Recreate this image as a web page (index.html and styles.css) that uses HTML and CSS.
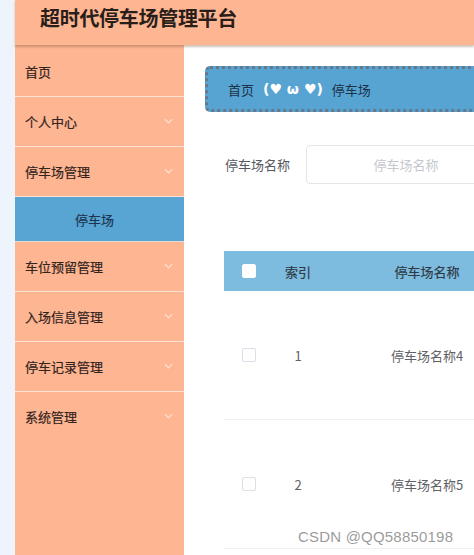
FILE: index.html
```html
<!DOCTYPE html>
<html lang="zh">
<head>
<meta charset="utf-8">
<title>超时代停车场管理平台</title>
<link rel="stylesheet" href="styles.css">
</head>
<body>
<div class="app">
  <header class="topbar"><h1 class="title">超时代停车场管理平台</h1></header>
  <div class="layout">
    <nav class="sidebar">
      <div class="menu-item">首页</div>
      <div class="menu-item">个人中心<svg class="chev" viewBox="0 0 10 6"><polyline points="1,1 5,5 9,1"/></svg></div>
      <div class="menu-item">停车场管理<svg class="chev" viewBox="0 0 10 6"><polyline points="1,1 5,5 9,1"/></svg></div>
      <div class="menu-item active">停车场</div>
      <div class="menu-item">车位预留管理<svg class="chev" viewBox="0 0 10 6"><polyline points="1,1 5,5 9,1"/></svg></div>
      <div class="menu-item">入场信息管理<svg class="chev" viewBox="0 0 10 6"><polyline points="1,1 5,5 9,1"/></svg></div>
      <div class="menu-item">停车记录管理<svg class="chev" viewBox="0 0 10 6"><polyline points="1,1 5,5 9,1"/></svg></div>
      <div class="menu-item last">系统管理<svg class="chev" viewBox="0 0 10 6"><polyline points="1,1 5,5 9,1"/></svg></div>
    </nav>
    <main class="main">
      <div class="crumb"><span>首页</span><span class="face">(♥ ω ♥)</span><span>停车场</span></div>
      <form class="search">
        <label class="label">停车场名称</label>
        <input class="input" type="text" placeholder="停车场名称">
      </form>
      <div class="table">
        <div class="row head">
          <div class="c c1"><span class="box white"></span></div>
          <div class="c c2">索引</div>
          <div class="c c3">停车场名称</div>
        </div>
        <div class="row">
          <div class="c c1"><span class="box"></span></div>
          <div class="c c2">1</div>
          <div class="c c3">停车场名称4</div>
        </div>
        <div class="row">
          <div class="c c1"><span class="box"></span></div>
          <div class="c c2">2</div>
          <div class="c c3">停车场名称5</div>
        </div>
      </div>
    </main>
  </div>
</div>
<div class="watermark">CSDN @QQ58850198</div>
</body>
</html>
```
FILE: styles.css
```css
html, body {
  margin: 0;
  padding: 0;
  height: 100%;
  overflow: hidden;
}
body {
  background: #eef4fb;
  font-family: "Noto Sans CJK SC", "Noto Sans", sans-serif;
  position: relative;
}
.app {
  margin-left: 15px;
  height: 100%;
  display: flex;
  flex-direction: column;
}
.topbar {
  height: 45px;
  flex: none;
  background: #fdb592;
  box-shadow: 0 2px 2px rgba(120, 80, 60, 0.35);
  position: relative;
  z-index: 2;
}
.title {
  margin: 0;
  padding-left: 25px;
  font-size: 20px;
  line-height: 36px;
  font-weight: 700;
  color: #2a1e1a;
  letter-spacing: -0.3px;
}
.layout {
  flex: 1;
  display: flex;
  min-height: 0;
}
.sidebar {
  width: 169px;
  flex: none;
  background: #fdb592;
  padding-top: 2px;
}
.menu-item {
  height: 49px;
  border-bottom: 1px solid #fde2d3;
  display: flex;
  align-items: center;
  justify-content: space-between;
  padding: 0 11px 0 10px;
  font-size: 13px;
  color: #33231d;
  -webkit-text-stroke: 0.2px #33231d;
}
.menu-item.last { border-bottom: none; }
.menu-item.active {
  height: 44px;
  background: #58a5d4;
  color: #1d3550;
  -webkit-text-stroke: 0.2px #1d3550;
  padding-left: 60px;
  justify-content: flex-start;
  border-bottom: 1px solid #e6d8cf;
}
.chev {
  width: 9px;
  height: 6px;
  fill: none;
  stroke: #fde3d5;
  stroke-width: 1.3;
  margin-top: -2px;
}
.main {
  flex: 1;
  background: #ffffff;
  padding: 21px 0 0 21px;
  overflow: hidden;
  min-width: 0;
}
.crumb {
  width: 600px;
  height: 46px;
  box-sizing: border-box;
  background: #57a4d3;
  border: 3px dotted #66788a;
  border-radius: 5px;
  display: flex;
  align-items: center;
  gap: 9px;
  padding-left: 20px;
  font-size: 13px;
  color: #1c3146;
}
.face {
  color: #ffffff;
  font-weight: 700;
  font-family: "DejaVu Sans", "Noto Sans CJK SC", sans-serif;
  font-size: 14px;
  white-space: pre;
}
.search {
  display: flex;
  align-items: center;
  margin-top: 33px;
  margin-left: 20px;
}
.label {
  flex: none;
  font-size: 13px;
  color: #55585e;
  width: 81px;
}
.input {
  flex: none;
  width: 200px;
  height: 39px;
  box-sizing: border-box;
  border: 1px solid #e2e5ea;
  border-radius: 4px;
  text-align: center;
  font-family: inherit;
  font-size: 13px;
  outline: none;
}
.input::placeholder { color: #c5c8cf; }
.table {
  margin-top: 67px;
  margin-left: 19px;
  width: 600px;
}
.row {
  display: flex;
  align-items: center;
  height: 128px;
  border-bottom: 1px solid #eef0f4;
  font-size: 13px;
  color: #5f6166;
}
.row.head {
  height: 40px;
  border-bottom: none;
  background: #7dbbdf;
  color: #2e3a46;
  -webkit-text-stroke: 0.2px #2e3a46;
}
.c { text-align: center; flex: none; }
.c1 { width: 50px; display: flex; justify-content: center; }
.c2 { width: 48px; }
.c3 { width: 210px; }
.box {
  width: 12px;
  height: 12px;
  border: 1px solid #dcdfe6;
  border-radius: 2px;
  background: #fff;
  display: block;
}
.box.white { border-color: #ffffff; }
.watermark {
  position: absolute;
  left: 298px;
  top: 528px;
  font-family: "Liberation Sans", Arial, sans-serif;
  font-size: 15px;
  color: rgba(120, 120, 120, 0.75);
  letter-spacing: 0.2px;
}
```
